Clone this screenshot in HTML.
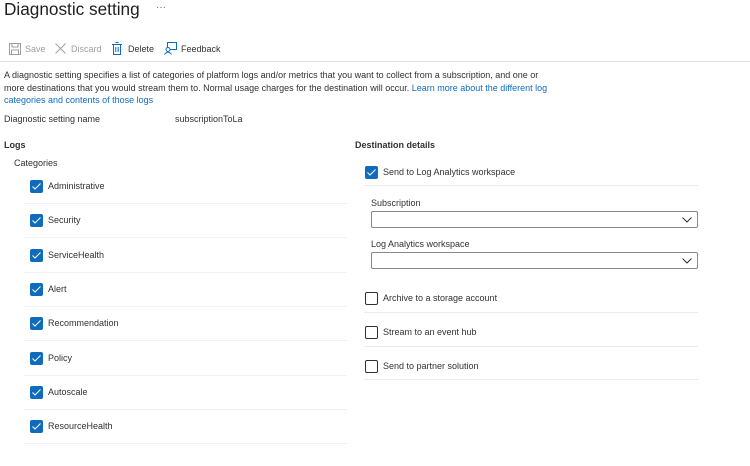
<!DOCTYPE html>
<html><head><meta charset="utf-8"><style>
*{margin:0;padding:0;box-sizing:border-box}
body{width:750px;height:466px;background:#fff;font-family:"Liberation Sans",sans-serif;color:#323130;position:relative;overflow:hidden;font-size:9px}
.a{position:absolute;white-space:nowrap}
.cb{position:absolute;width:13px;height:13px;background:#0f6cbd;border-radius:2px}
.cb svg{position:absolute;left:2px;top:3px}
.ucb{position:absolute;width:13px;height:13px;border:1px solid #323130;border-radius:2px;background:#fff}
.hl{position:absolute;height:1px;background:#edebe9}
.dd{position:absolute;left:371px;width:327px;height:17px;border:1px solid #8a8886;border-radius:2px;background:#fff}
.dd svg{position:absolute;right:5px;top:5px}
</style></head><body>
<div class="a" style="left:4px;top:-1px;font-size:17.2px;color:#201f1e">Diagnostic setting</div>
<div class="a" style="left:156px;top:2px;font-size:10px;color:#605e5c">···</div>

<svg class="a" style="left:9px;top:43px" width="12" height="12" viewBox="0 0 12 12"><rect x="0.5" y="0.5" width="11" height="11" fill="none" stroke="#a19f9d"/><rect x="3" y="0.5" width="6" height="3.5" fill="none" stroke="#a19f9d"/><rect x="2.5" y="7" width="7" height="4.5" fill="none" stroke="#a19f9d"/></svg>
<div class="a" style="left:25px;top:44px;color:#a19f9d">Save</div>
<svg class="a" style="left:55px;top:43px" width="11" height="11"><path d="M0.5 0.5L10.5 10.5M10.5 0.5L0.5 10.5" stroke="#a19f9d"/></svg>
<div class="a" style="left:71px;top:44px;color:#a19f9d">Discard</div>
<svg class="a" style="left:112px;top:42px" width="10" height="13" viewBox="0 0 10 13"><rect x="1.5" y="2.5" width="7" height="10" fill="none" stroke="#0f6cbd"/><path d="M0 2.5H10M3.5 0.5H6.5M3.8 5V10M6.2 5V10" stroke="#0f6cbd"/></svg>
<div class="a" style="left:128px;top:44px">Delete</div>
<svg class="a" style="left:164px;top:42px" width="13" height="13" viewBox="0 0 13 13"><rect x="3.5" y="0.5" width="9" height="7" fill="none" stroke="#0f6cbd"/><circle cx="4" cy="7.5" r="2" fill="#fff" stroke="#0f6cbd"/><path d="M0.5 12.5Q4 8 7.5 12.5" fill="none" stroke="#0f6cbd"/></svg>
<div class="a" style="left:181px;top:44px">Feedback</div>
<div class="hl" style="left:0;top:61px;width:750px;background:#e1dfdd"></div>

<div class="a" style="left:4px;top:69px;line-height:12.5px;white-space:normal;width:548px">A diagnostic setting specifies a list of categories of platform logs and/or metrics that you want to collect from a subscription, and one or more destinations that you would stream them to. Normal usage charges for the destination will occur. <span style="color:#0f6cbd">Learn more about the different log categories and contents of those logs</span></div>

<div class="a" style="left:4px;top:114px">Diagnostic setting name</div>
<div class="a" style="left:175px;top:114px">subscriptionToLa</div>

<div class="a" style="left:4px;top:140px;font-weight:bold">Logs</div>
<div class="a" style="left:14px;top:158px">Categories</div>

<div class="a" style="left:355px;top:140px;font-weight:bold">Destination details</div>
<div class="cb" style="left:365px;top:166px"><svg width="9" height="7"><path d="M0.5 3.5L3 6L8.5 0.5" stroke="#fff" fill="none"/></svg></div>
<div class="a" style="left:383px;top:167px">Send to Log Analytics workspace</div>
<div class="hl" style="left:364px;top:185px;width:334px"></div>
<div class="a" style="left:371px;top:198px">Subscription</div>
<div class="dd" style="top:211px"><svg width="10" height="6"><path d="M0.5 0.5L5 5L9.5 0.5" stroke="#323130" fill="none"/></svg></div>
<div class="a" style="left:371px;top:239px">Log Analytics workspace</div>
<div class="dd" style="top:252px"><svg width="10" height="6"><path d="M0.5 0.5L5 5L9.5 0.5" stroke="#323130" fill="none"/></svg></div>
<div class="ucb" style="left:365px;top:292px"></div><div class="a" style="left:383px;top:293px">Archive to a storage account</div>
<div class="hl" style="left:364px;top:312px;width:334px"></div>
<div class="ucb" style="left:365px;top:326px"></div><div class="a" style="left:383px;top:327px">Stream to an event hub</div>
<div class="hl" style="left:364px;top:346px;width:334px"></div>
<div class="ucb" style="left:365px;top:360px"></div><div class="a" style="left:383px;top:361px">Send to partner solution</div>
<div class="hl" style="left:364px;top:379px;width:334px"></div>

<div id="cats"></div>
<script>
var n=["Administrative","Security","ServiceHealth","Alert","Recommendation","Policy","Autoscale","ResourceHealth"],h="";
for(var i=0;i<8;i++){var y=186+i*34.3;
h+='<div class="cb" style="left:30px;top:'+(y-6)+'px"><svg width="9" height="7"><path d="M0.5 3.5L3 6L8.5 0.5" stroke="#fff" fill="none"/></svg></div>';
h+='<div class="a" style="left:48px;top:'+(y-5)+'px">'+n[i]+'</div>';
h+='<div class="hl" style="left:24px;top:'+(y+17)+'px;width:323px;background:#f3f2f1"></div>';}
document.getElementById("cats").innerHTML=h;
</script>
</body></html>
